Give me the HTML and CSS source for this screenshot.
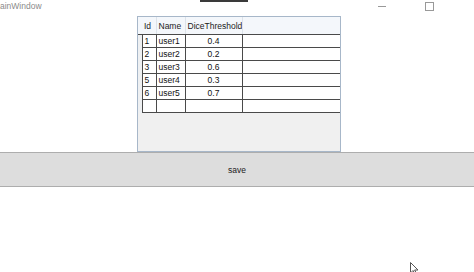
FILE: index.html
```html
<!DOCTYPE html>
<html lang="en">
<head>
    <meta charset="UTF-8">
    <title>MainWindow</title>
    <link rel="stylesheet" href="styles.css">
</head>
<body>
    <div class="titlebar">
        <span class="title">ainWindow</span>
        <div class="controls">
            <span class="min"></span>
            <span class="max"></span>
        </div>
    </div>
    <div class="strip"></div>

    <div class="content">
        <div class="grid">
            <table>
                <colgroup>
                    <col class="w-rh">
                    <col class="w-id">
                    <col class="w-name">
                    <col class="w-dice">
                    <col>
                </colgroup>
                <tr class="head">
                    <th class="rh"></th>
                    <th>Id</th>
                    <th>Name</th>
                    <th class="c-dice">DiceThreshold</th>
                    <th class="c-fill"></th>
                </tr>
                <tr><td class="rh"></td><td>1</td><td>user1</td><td class="num">0.4</td><td></td></tr>
                <tr><td class="rh"></td><td>2</td><td>user2</td><td class="num">0.2</td><td></td></tr>
                <tr><td class="rh"></td><td>3</td><td>user3</td><td class="num">0.6</td><td></td></tr>
                <tr><td class="rh"></td><td>5</td><td>user4</td><td class="num">0.3</td><td></td></tr>
                <tr><td class="rh"></td><td>6</td><td>user5</td><td class="num">0.7</td><td></td></tr>
                <tr><td class="rh"></td><td></td><td></td><td></td><td></td></tr>
            </table>
        </div>
    </div>

    <button class="save">save</button>

    <svg class="cursor" width="12" height="12" viewBox="0 0 12 12">
        <path d="M0.5 0.5 L0.5 11 L3 8.5 L5 12 L6.5 11.3 L4.6 8 L8 8 Z" fill="#fff" stroke="#555" stroke-width="1"/>
    </svg>
</body>
</html>
```

FILE: styles.css
```css
body {
    margin: 0;
    font-family: "Liberation Sans", Arial, sans-serif;
    font-size: 8.5px;
    color: #111;
    background: #fff;
    overflow: hidden;
    height: 272px;
    position: relative;
}
.titlebar {
    height: 16px;
    display: flex;
    justify-content: space-between;
    align-items: flex-start;
    overflow: hidden;
}
.title {
    margin-top: 1px;
    color: #8a8a8a;
    font-size: 8.5px;
}
.controls {
    display: flex;
    gap: 39px;
    margin-right: 40px;
    margin-top: 2px;
}
.min {
    width: 8px;
    height: 1px;
    margin-top: 4px;
    background: #999;
}
.max {
    width: 7px;
    height: 7px;
    border: 1px solid #999;
}
.strip {
    position: absolute;
    left: 200px;
    top: 0;
    width: 48px;
    height: 2px;
    background: #3a3a3a;
}
.content {
    display: flex;
    justify-content: center;
    padding-left: 4px;
}
.grid {
    width: 202px;
    height: 134px;
    border: 1px solid #a7b7c9;
    background: #f0f0f0;
}
table {
    border-collapse: collapse;
    width: 202px;
    table-layout: fixed;
}
.w-rh { width: 4px; }
.w-id { width: 14px; }
.w-name { width: 29px; }
.w-dice { width: 57px; }
th, td {
    padding: 0 0 0 2px;
    text-align: left;
    white-space: nowrap;
    overflow: hidden;
    font-weight: normal;
}
th {
    height: 16px;
    background: #f4f7fb;
    border-right: 1px solid #dde3ea;
    border-bottom: 1px solid #4a4a4a;
    color: #222;
    padding-top: 1px;
}
td {
    height: 12px;
    line-height: 12px;
    background: #fff;
    border-right: 1px solid #4a4a4a;
    border-bottom: 1px solid #4a4a4a;
}
.rh {
    padding: 0;
    background: #eef0f2;
}
th.rh {
    border-right: none;
    background: #f4f7fb;
}
td.rh {
    border-bottom: none;
}
.c-dice { padding-left: 2px; }
.c-fill { border-right: none; }
td:last-child { border-right: none; }
.num {
    text-align: center;
    padding: 0;
}
.save {
    display: block;
    width: 100%;
    height: 35px;
    margin: 0;
    border: 1px solid #adadad;
    border-left: none;
    border-right: none;
    background: #dddddd;
    font-family: "Liberation Sans", Arial, sans-serif;
    font-size: 8.5px;
    color: #222;
}
.cursor {
    position: absolute;
    left: 410px;
    top: 262px;
}
```
